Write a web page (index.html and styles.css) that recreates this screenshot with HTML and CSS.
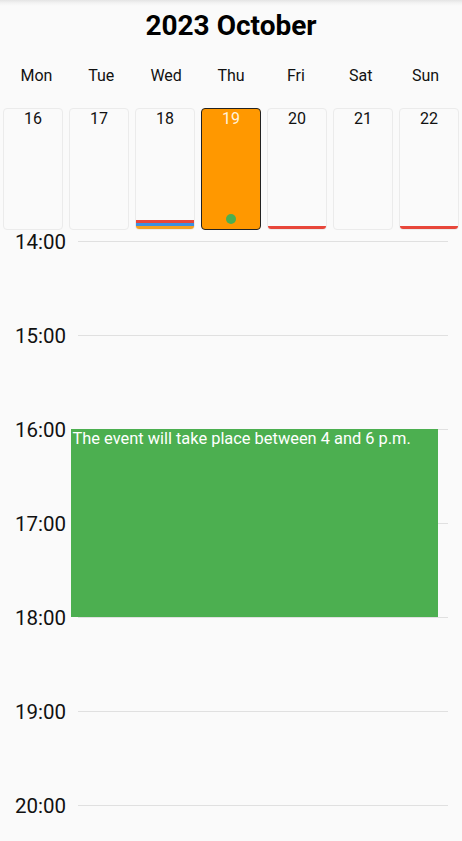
FILE: index.html
```html
<!DOCTYPE html>
<html lang="en">
<head>
<meta charset="utf-8">
<title>2023 October</title>
<link rel="stylesheet" href="styles.css">
</head>
<body>
<div class="shade"></div>
<h1 class="title">2023 October</h1>
<div class="weekdays">
  <span>Mon</span><span>Tue</span><span>Wed</span><span>Thu</span><span>Fri</span><span>Sat</span><span>Sun</span>
</div>
<div class="days">
  <div class="day"><span class="num">16</span></div>
  <div class="day"><span class="num">17</span></div>
  <div class="day"><span class="num">18</span>
    <div class="bars"><i class="bar red"></i><i class="bar blue"></i><i class="bar orange"></i></div>
  </div>
  <div class="day selected"><span class="num">19</span><i class="dot"></i></div>
  <div class="day"><span class="num">20</span>
    <div class="bars"><i class="bar red"></i></div>
  </div>
  <div class="day"><span class="num">21</span></div>
  <div class="day"><span class="num">22</span>
    <div class="bars"><i class="bar red"></i></div>
  </div>
</div>
<div class="timeline">
  <div class="event">The event will take place between 4 and 6 p.m.</div>
  <div class="hour"><span class="label">14:00</span><span class="line"></span></div>
  <div class="hour"><span class="label">15:00</span><span class="line"></span></div>
  <div class="hour"><span class="label">16:00</span><span class="line"></span></div>
  <div class="hour"><span class="label">17:00</span><span class="line"></span></div>
  <div class="hour"><span class="label">18:00</span><span class="line"></span></div>
  <div class="hour"><span class="label">19:00</span><span class="line"></span></div>
  <div class="hour last"><span class="label">20:00</span><span class="line"></span></div>
</div>
</body>
</html>
```

FILE: styles.css
```css
html, body {
  margin: 0;
  padding: 0;
  background: #fafafa;
  font-family: Roboto, "Liberation Sans", sans-serif;
  color: #111;
}

.shade {
  height: 6px;
  background: linear-gradient(to bottom, #e4e4e4, #f3f3f3 50%, #fafafa);
}

.title {
  margin: 0;
  padding-top: 2px;
  font-size: 28px;
  line-height: 36px;
  font-weight: 700;
  text-align: center;
  color: #000;
}

.weekdays {
  display: grid;
  grid-template-columns: repeat(7, 1fr);
  padding: 0 4px;
  margin-top: 22px;
  height: 20px;
  font-size: 16px;
  line-height: 20px;
  text-align: center;
  color: #111;
}

.days {
  display: grid;
  grid-template-columns: repeat(7, 66px);
  margin-top: 22px;
}

.day {
  margin: 0 3px;
  height: 121.5px;
  box-sizing: border-box;
  border: 1px solid #ebebeb;
  border-radius: 4px;
  display: flex;
  flex-direction: column;
  align-items: stretch;
  overflow: hidden;
}

.num {
  display: block;
  text-align: center;
  font-size: 16px;
  line-height: 20px;
  color: #111;
}

.bars {
  margin-top: auto;
  display: flex;
  flex-direction: column;
}

.bar {
  display: block;
  height: 3px;
}

.red { background: #e8463a; }
.blue { background: #3d8fe0; }
.orange { background: #f5a020; }

.day.selected {
  background: #ff9800;
  border-color: #222;
  align-items: center;
}

.day.selected .num {
  color: #fff3dc;
}

.dot {
  display: block;
  margin-top: auto;
  margin-bottom: 5px;
  width: 10px;
  height: 10px;
  border-radius: 50%;
  background: #4caf50;
}

.timeline {
  position: relative;
}

.hour {
  display: flex;
  align-items: center;
  height: 24px;
  margin-bottom: 70px;
}

.hour.last {
  margin-bottom: 0;
}

.label {
  width: 66px;
  text-align: right;
  font-size: 20.5px;
  line-height: 24px;
  color: #111;
}

.line {
  flex: 1;
  height: 1px;
  margin: 0 14px 0 12px;
  background: #e0e0e0;
}

.event {
  position: absolute;
  z-index: 1;
  left: 71px;
  top: 199px;
  width: 367px;
  height: 188px;
  box-sizing: border-box;
  padding-left: 1.5px;
  background: #4caf50;
  color: #fff;
  font-size: 16.4px;
  line-height: 19px;
  white-space: nowrap;
}
```
